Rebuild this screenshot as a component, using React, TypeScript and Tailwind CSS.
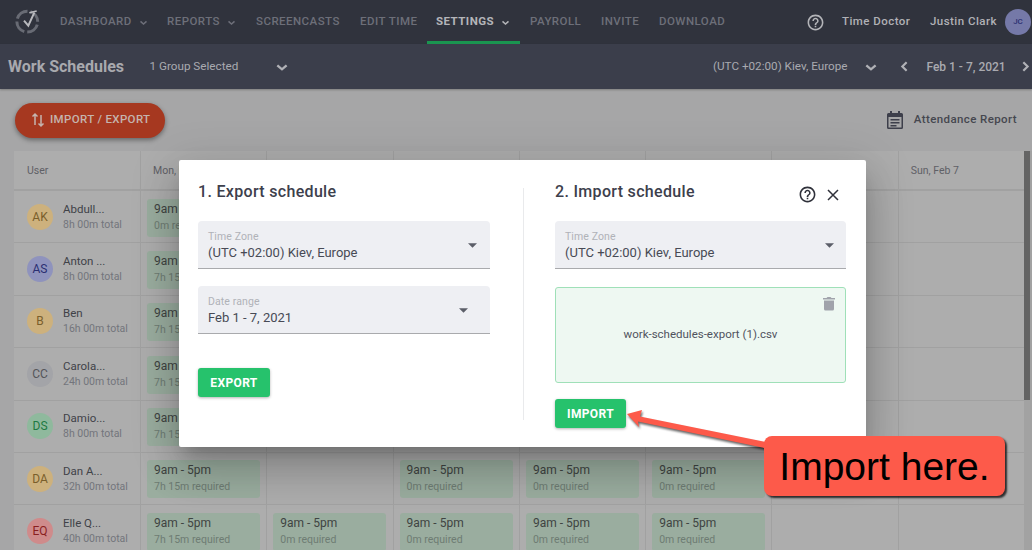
import React from "react";

const font = { fontFamily: "Roboto, sans-serif" };

function Chevron({ className, dir = "down" }: { className?: string; dir?: "down" | "left" | "right" }) {
  const d = dir === "down" ? "M2 4.5 L6 8 L10 4.5" : dir === "left" ? "M8 2 L4 6 L8 10" : "M4 2 L8 6 L4 10";
  return (
    <svg viewBox="0 0 12 12" className={className} fill="none" stroke="currentColor" strokeWidth="2">
      <path d={d} />
    </svg>
  );
}

function Caret({ className }: { className?: string }) {
  return (
    <svg viewBox="0 0 10 5" className={className} fill="currentColor">
      <path d="M0 0h10L5 5z" />
    </svg>
  );
}

function Help({ className }: { className?: string }) {
  return (
    <svg viewBox="0 0 24 24" className={className} fill="currentColor">
      <path d="M11 18h2v-2h-2v2zm1-16C6.48 2 2 6.48 2 12s4.48 10 10 10 10-4.48 10-10S17.52 2 12 2zm0 18c-4.41 0-8-3.59-8-8s3.59-8 8-8 8 3.59 8 8-3.59 8-8 8zm0-14c-2.21 0-4 1.79-4 4h2c0-1.1.9-2 2-2s2 .9 2 2c0 2-3 1.75-3 5h2c0-2.25 3-2.5 3-5 0-2.21-1.79-4-4-4z" />
    </svg>
  );
}

function Logo() {
  return (
    <svg viewBox="0 0 28 28" className="w-[28px] h-[28px]" fill="none">
      <circle cx="14.3" cy="13.7" r="10.4" stroke="#686b74" strokeWidth="3" strokeDasharray="13.3 3" strokeDashoffset="-3" />
      <path d="M11 12.7 L15.300 17.600 L21.300 4.700" stroke="#b9babe" strokeWidth="2" />
      <path d="M16.300 4.700 L23.700 3" stroke="#b9babe" strokeWidth="1.6" />
    </svg>
  );
}

function Nav({ label, w, chevron, active }: { label: string; w: string; chevron?: boolean; active?: boolean }) {
  return (
    <div className={`flex items-center h-full ${w} ${active ? "text-[#b4b5b9] font-bold" : "text-[#6d6f79] font-medium"} text-[11.5px] tracking-[0.04em] whitespace-nowrap`}>
      <span>{label}</span>
      {chevron && <Chevron className="w-[9px] h-[9px] ml-[7px] mt-[1px]" />}
    </div>
  );
}

function Shift({ req }: { req: string }) {
  return (
    <div className="w-[113px] h-[38px] rounded-[3px] bg-[#9aad9f] pl-[7px] pt-[3px] text-[12px] leading-[15px]">
      <div className="text-[#3f4442]">9am - 5pm</div>
      <div className="text-[10.5px] mt-[1px] text-[#6e7c73]">{req}</div>
    </div>
  );
}

const rows: { i: string; c: string; t: string; name: string; total: string; cells: (string | null)[] }[] = [
  { i: "AK", c: "bg-[#cdb17d]", t: "text-[#7a5f2b]", name: "Abdull...", total: "8h 00m total", cells: ["0m required"] },
  { i: "AS", c: "bg-[#8f93bd]", t: "text-[#2b2f72]", name: "Anton ...", total: "8h 00m total", cells: ["7h 15m required"] },
  { i: "B", c: "bg-[#cdb17d]", t: "text-[#7a5f2b]", name: "Ben", total: "16h 00m total", cells: ["7h 15m required"] },
  { i: "CC", c: "bg-[#a3a4a8]", t: "text-[#55565a]", name: "Carola...", total: "24h 00m total", cells: ["7h 15m required"] },
  { i: "DS", c: "bg-[#8fb99d]", t: "text-[#1d7a42]", name: "Damio...", total: "8h 00m total", cells: ["7h 15m required"] },
  { i: "DA", c: "bg-[#cdb17d]", t: "text-[#7a5f2b]", name: "Dan A...", total: "32h 00m total", cells: ["7h 15m required", null, "0m required", "0m required", "0m required"] },
  { i: "EQ", c: "bg-[#cf8b8b]", t: "text-[#8a1f1f]", name: "Elle Q...", total: "40h 00m total", cells: ["7h 15m required", "0m required", "0m required", "0m required", "0m required"] },
];

const days = ["Mon, Feb 1", "Tue, Feb 2", "Wed, Feb 3", "Thu, Feb 4", "Fri, Feb 5", "Sat, Feb 6", "Sun, Feb 7"];
const cols = "grid grid-cols-[126px_repeat(7,126.3px)]";

function Field({ label, value, caretClass }: { label: string; value: string; caretClass: string }) {
  return (
    <div className="relative h-[48px] bg-[#eeeff3] rounded-t-[4px] border-b border-[#a9aaad] pl-[10px] pt-[10px]">
      <div className="text-[10.5px] leading-[11px] text-[#b0b2b8] tracking-[0.01em]">{label}</div>
      <div className="text-[13px] leading-[18px] mt-[2px] text-[#474a55]">{value}</div>
      <Caret className={`absolute top-[22px] w-[9px] h-[5px] text-[#5b5e68] ${caretClass}`} />
    </div>
  );
}

function Green({ label, w }: { label: string; w: string }) {
  return (
    <div className={`${w} h-[29px] rounded-[3px] bg-[#26c26c] text-white text-[12px] font-bold tracking-[0.03em] flex items-center justify-center shadow-[0_1px_3px_rgba(0,0,0,0.3)]`}>
      {label}
    </div>
  );
}

export default function App() {
  return (
    <div style={font} className="relative w-[1032px] h-[550px] overflow-hidden bg-[#a6a6a7]">
      <header className="h-[44px] bg-[#30333d] flex items-center pl-[13px]">
        <Logo />
        <div className="flex h-full ml-[19px]">
          <Nav label="DASHBOARD" w="w-[107px]" chevron />
          <Nav label="REPORTS" w="w-[89px]" chevron />
          <Nav label="SCREENCASTS" w="w-[104px]" />
          <Nav label="EDIT TIME" w="w-[67px]" />
          <div className="relative w-[93px] h-full pl-[9px]">
            <Nav label="SETTINGS" w="w-full" chevron active />
            <div className="absolute left-0 right-0 bottom-0 h-[3px] bg-[#1a9550]" />
          </div>
          <div className="w-[10px]" />
          <Nav label="PAYROLL" w="w-[71px]" />
          <Nav label="INVITE" w="w-[58px]" />
          <Nav label="DOWNLOAD" w="w-[84px]" />
        </div>
        <Help className="w-[19px] h-[19px] text-[#b4b5b9] ml-[63px] shrink-0" />
        <div className="text-[11.5px] font-medium tracking-[0.04em] text-[#b0b1b6] ml-[17px] w-[88px] whitespace-nowrap">Time Doctor</div>
        <div className="text-[11.5px] font-medium tracking-[0.04em] text-[#b0b1b6] w-[75px] whitespace-nowrap">Justin Clark</div>
        <div className="w-[26px] h-[26px] rounded-full bg-[#7579a8] text-[#2b2f72] text-[8px] font-medium flex items-center justify-center shrink-0">JC</div>
      </header>

      <div className="h-[45px] bg-[#3b3e4b] flex items-center text-[#a9aab0] shadow-[0_1px_2px_rgba(0,0,0,0.25)]">
        <div className="text-[16px] font-bold text-[#a8a9ae] ml-[8px] w-[142px] whitespace-nowrap">Work Schedules</div>
        <div className="text-[11.7px] w-[126px] whitespace-nowrap">1 Group Selected</div>
        <Chevron className="w-[14px] h-[14px] text-[#b0b1b6]" />
        <div className="text-[11.7px] ml-[424px] w-[151px] whitespace-nowrap">(UTC +02:00) Kiev, Europe</div>
        <Chevron className="w-[14px] h-[14px] text-[#b0b1b6] ml-[1px]" />
        <Chevron dir="left" className="w-[13px] h-[13px] text-[#b0b1b6] ml-[20px]" />
        <div className="text-[12px] font-medium ml-[15px] w-[93px] whitespace-nowrap">Feb 1 - 7, 2021</div>
        <Chevron dir="right" className="w-[13px] h-[13px] text-[#b0b1b6]" />
      </div>

      <div className="flex items-center h-[62px] pl-[15px] pr-[15px]">
        <div className="w-[150px] h-[35px] rounded-full bg-[#a63820] text-[#c5b4ae] flex items-center pl-[16px] text-[11.5px] font-medium tracking-[0.03em] shadow-[0_2px_5px_rgba(0,0,0,0.4)]">
          <svg viewBox="0 0 14 16" className="w-[14px] h-[16px] mr-[5px]" fill="none" stroke="currentColor" strokeWidth="1.5">
            <path d="M4 13V2M1.500 4.500L4 2l2.500 2.500M10 3v11M7.500 11.500L10 14l2.500-2.500" />
          </svg>
          <span className="whitespace-nowrap">IMPORT / EXPORT</span>
        </div>
        <div className="ml-auto flex items-center text-[#3d3f4b]">
          <svg viewBox="0 0 16 18" className="w-[16px] h-[18px]" fill="currentColor">
            <path d="M3 0h2v2h6V0h2v2h1.500A1.500 1.500 0 0 1 16 3.500v13a1.500 1.500 0 0 1-1.500 1.500h-13A1.500 1.500 0 0 1 0 16.500v-13A1.500 1.500 0 0 1 1.500 2H3V0zM1.500 6v10.500h13V6h-13zM3.500 8h9v1.500h-9V8zm0 3h9v1.500h-9V11zm0 3h6v1.500h-6V14z" />
          </svg>
          <span className="text-[11.5px] font-medium tracking-[0.035em] ml-[11px] text-[#45474f] whitespace-nowrap">Attendance Report</span>
        </div>
      </div>

      <div className="flex items-start pl-[14px]">
        <div className="w-[1010px] bg-[#adadad] overflow-hidden">
          <div className={`${cols} h-[40px] border-b-2 border-[#a1a1a1] text-[10.5px] text-[#5f6066]`}>
            <div className="flex items-center pl-[13px] pt-[2px]">User</div>
            {days.map((d) => (
              <div key={d} className="flex items-center pl-[12px] pt-[2px] border-l border-[#a1a1a1]">{d}</div>
            ))}
          </div>
          {rows.map((r) => (
            <div key={r.i} className={`${cols} h-[52.4px] border-b border-[#a1a1a1]`}>
              <div className="flex items-center pl-[13px]">
                <div className={`w-[26px] h-[26px] rounded-full ${r.c} ${r.t} flex items-center justify-center text-[12px] shrink-0`}>{r.i}</div>
                <div className="ml-[10px] whitespace-nowrap">
                  <div className="text-[11.5px] leading-[15px] text-[#404248]">{r.name}</div>
                  <div className="text-[10.5px] leading-[14px] mt-[1px] text-[#73757c]">{r.total}</div>
                </div>
              </div>
              {[0, 1, 2, 3, 4, 5, 6].map((i) => (
                <div key={i} className="border-l border-[#a1a1a1] pl-[6px] pt-[7.5px]">
                  {r.cells[i] ? <Shift req={r.cells[i] as string} /> : null}
                </div>
              ))}
            </div>
          ))}
        </div>
        <div className="w-[8px] h-[399px] bg-[#a2a2a2]">
          <div className="w-[6px] h-[249px] bg-[#646464]" />
        </div>
      </div>

      {/* Dialog */}
      <div className="absolute left-[179px] top-[160px] w-[687px] h-[287px] bg-white rounded-[2px] flex shadow-[0_11px_15px_-7px_rgba(0,0,0,0.2),0_24px_38px_3px_rgba(0,0,0,0.14),0_9px_46px_8px_rgba(0,0,0,0.12)]">
        <div className="w-[344px] pl-[19px] pt-[22px]">
          <div className="w-[292px]">
            <div className="text-[16px] leading-[20px] font-medium text-[#3d404c] tracking-[0.02em]">1. Export schedule</div>
            <div className="mt-[19px] flex flex-col gap-[17px]">
              <Field label="Time Zone" value="(UTC +02:00) Kiev, Europe" caretClass="right-[13px]" />
              <Field label="Date range" value="Feb 1 - 7, 2021" caretClass="right-[22px]" />
            </div>
            <div className="mt-[34px]">
              <Green label="EXPORT" w="w-[72px]" />
            </div>
          </div>
        </div>
        <div className="w-px h-[232px] mt-[28px] bg-[#e9eaec]" />
        <div className="pl-[31px] pt-[22px] w-[323px] relative">
          <div className="text-[16px] leading-[20px] font-medium text-[#3d404c] tracking-[0.02em]">2. Import schedule</div>
          <Help className="absolute left-[274px] top-[25px] w-[19px] h-[19px] text-[#2f313a]" />
          <svg viewBox="0 0 12 12" className="absolute left-[303px] top-[29px] w-[12px] h-[12px]" stroke="#2f313a" strokeWidth="1.500" fill="none">
            <path d="M1 1l10 10M11 1L1 11" />
          </svg>
          <div className="mt-[19px] w-[291px]">
            <Field label="Time Zone" value="(UTC +02:00) Kiev, Europe" caretClass="right-[12px]" />
            <div className="relative mt-[18px] h-[96px] rounded-[3px] border-[1.5px] border-[#9fe0b8] bg-[#eef8f2] flex items-center justify-center text-[11.5px] text-[#50535e]">
              work-schedules-export (1).csv
              <svg viewBox="0 0 12 14" className="absolute right-[10px] top-[8px] w-[12px] h-[15px]" fill="#a0a3ab">
                <path d="M1 4h10v8.500A1.500 1.500 0 0 1 9.500 14h-7A1.500 1.500 0 0 1 1 12.500V4zM0 1.500h3.500L4.500 .5h3l1 1H12V3H0z" />
              </svg>
            </div>
            <div className="mt-[16px]">
              <Green label="IMPORT" w="w-[71px]" />
            </div>
          </div>
        </div>
      </div>

      {/* Annotation arrow */}
      <svg className="absolute left-[620px] top-[400px] w-[160px] h-[60px] drop-shadow-[1px_2px_1px_rgba(0,0,0,0.6)]" viewBox="620 400 160 60">
        <path d="M627 414 L642 410 L640 416.500 L771 443 L769 449 L638 421.500 L639 427 Z" fill="#fd5a4a" />
      </svg>
      <div className="absolute left-[764px] top-[436px] w-[241px] h-[60px] rounded-[8px] bg-[#fd5a4a] shadow-[2px_2px_2px_rgba(0,0,0,0.75)] flex items-center justify-center text-black text-[39px] leading-none" style={{ fontFamily: '"Liberation Sans", sans-serif' }}>
        Import here.
      </div>
    </div>
  );
}
